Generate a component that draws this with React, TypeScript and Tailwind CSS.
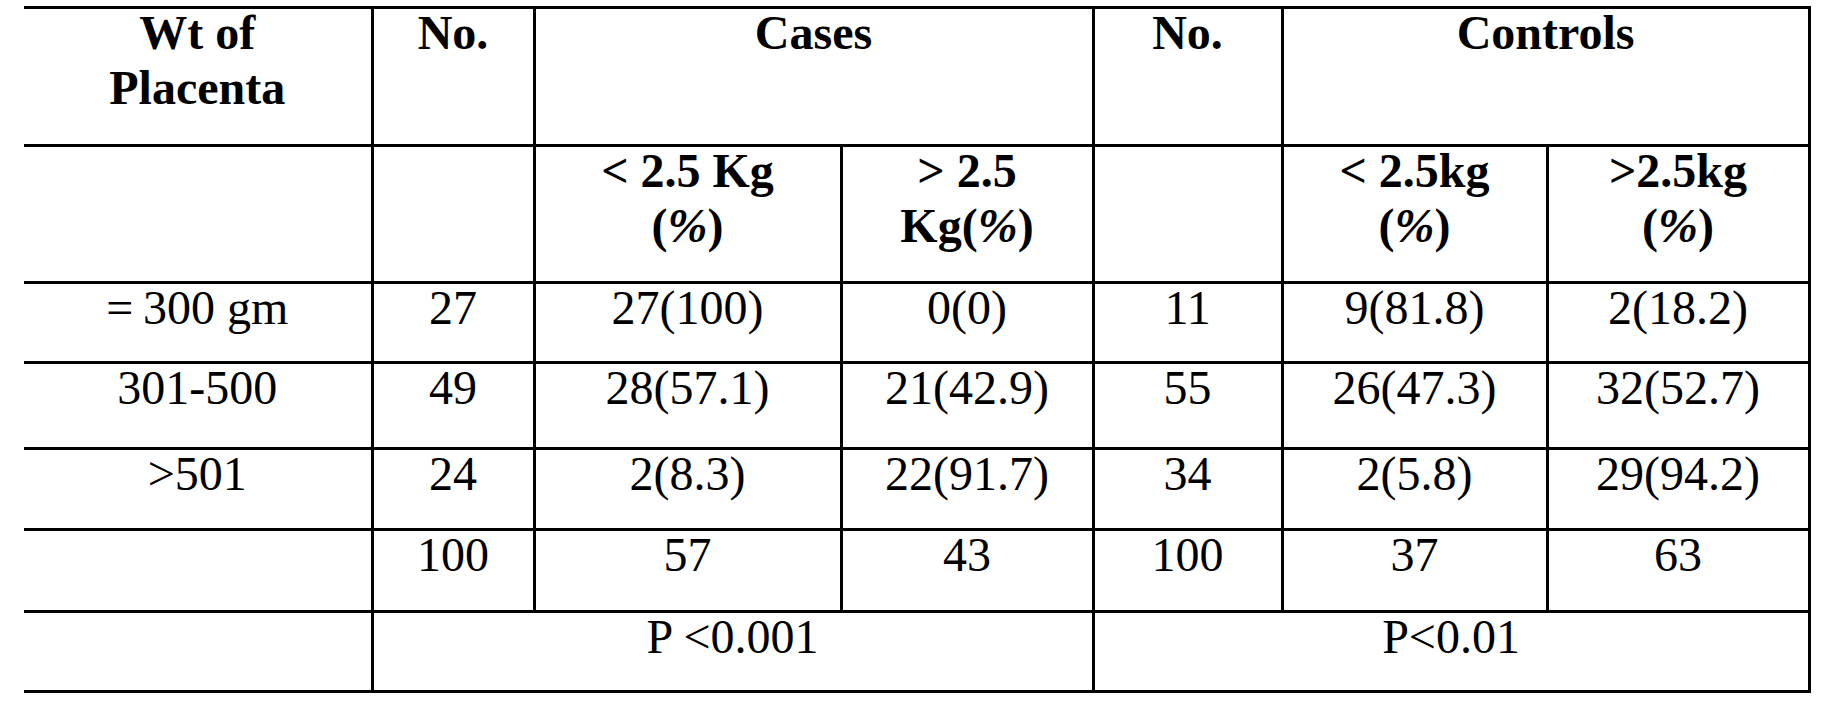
const widths = ["w-[348px]", "w-[162px]", "w-[307px]", "w-[252px]", "w-[189px]", "w-[265px]", "w-[262px]"];

const dataRows = [
  { h: "h-[80px]", cells: ["=\u2009300 gm", "27", "27(100)", "0(0)", "11", "9(81.8)", "2(18.2)"] },
  { h: "h-[86px]", cells: ["301-500", "49", "28(57.1)", "21(42.9)", "55", "26(47.3)", "32(52.7)"] },
  { h: "h-[81px]", cells: [">501", "24", "2(8.3)", "22(91.7)", "34", "2(5.8)", "29(94.2)"] },
  { h: "h-[82px]", cells: ["", "100", "57", "43", "100", "37", "63"] },
];

const cell = "border-[3px] border-black p-0 align-top text-center";

const Pct = () => (
  <>
    (<span className="italic">%</span>)
  </>
);

const Cell = ({
  children,
  first,
  bold,
  span,
}: {
  children?: React.ReactNode;
  first?: boolean;
  bold?: boolean;
  span?: number;
}) => (
  <td colSpan={span} className={`${cell} ${first ? "border-l-0" : ""} ${bold ? "font-bold" : "font-normal"}`}>
    <div className="-mt-[4px] leading-[55px]">{children}</div>
  </td>
);

export default function App() {
  return (
    <div className="min-h-screen bg-white pt-[6px] pl-[24px]">
      <table className="table-fixed border-collapse w-[1785px] font-['Liberation_Serif','Times_New_Roman',serif] text-[48px] text-black">
        <colgroup>
          {widths.map((w, i) => (
            <col key={i} className={w} />
          ))}
        </colgroup>
        <tbody>
          <tr className="h-[138px]">
            <Cell first bold>
              Wt of
              <br />
              Placenta
            </Cell>
            <Cell bold>No.</Cell>
            <Cell bold span={2}>
              Cases
            </Cell>
            <Cell bold>No.</Cell>
            <Cell bold span={2}>
              Controls
            </Cell>
          </tr>
          <tr className="h-[137px]">
            <Cell first bold />
            <Cell bold />
            <Cell bold>
              &lt; 2.5 Kg
              <br />
              <Pct />
            </Cell>
            <Cell bold>
              &gt; 2.5
              <br />
              Kg<Pct />
            </Cell>
            <Cell bold />
            <Cell bold>
              &lt; 2.5kg
              <br />
              <Pct />
            </Cell>
            <Cell bold>
              &gt;2.5kg
              <br />
              <Pct />
            </Cell>
          </tr>
          {dataRows.map((row, i) => (
            <tr key={i} className={row.h}>
              {row.cells.map((c, j) => (
                <Cell key={j} first={j === 0}>
                  {c}
                </Cell>
              ))}
            </tr>
          ))}
          <tr className="h-[80px]">
            <Cell first />
            <Cell span={3}>P &lt;0.001</Cell>
            <Cell span={3}>P&lt;0.01</Cell>
          </tr>
        </tbody>
      </table>
    </div>
  );
}
